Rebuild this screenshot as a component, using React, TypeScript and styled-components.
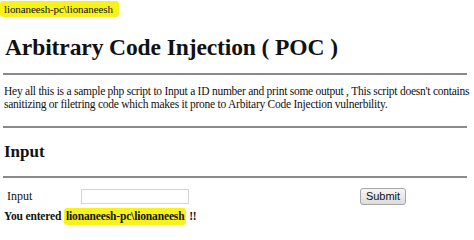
import React from 'react';
import styled, { createGlobalStyle } from 'styled-components';

const Global = createGlobalStyle`
  body {
    margin: 0;
    background: #ffffff;
    font-family: "Liberation Serif", "Times New Roman", serif;
    color: #111;
  }
`;

const Page = styled.div`
  width: 474px;
  height: 234px;
  overflow: hidden;
  padding: 0 4px;
  box-sizing: border-box;
`;

const Marker = styled.span`
  background: #f7f21c;
  padding: 2px 2px 3px;
  border-radius: 3px;
`;

const UserLine = styled.div`
  font-size: 11px;
  line-height: 14px;
  letter-spacing: -0.1px;
  padding-top: 2px;
  margin-left: -4px;
  & > span {
    padding: 2px 6px 2px 4px;
  }
`;

const Title = styled.h1`
  font-size: 23.5px;
  letter-spacing: -0.1px;
  font-weight: bold;
  margin: 17px 0 0 1px;
  line-height: 28px;
`;

const Rule = styled.hr<{ $top: number }>`
  margin: ${(p) => p.$top}px 3px 0 -1px;
  border: none;
  border-top: 2px solid #8a8a8a;
  height: 0;
`;

const Para = styled.p`
  font-size: 11.5px;
  letter-spacing: -0.25px;
  line-height: 13px;
  margin: 10px 0 0 0;
`;

const Section = styled.h2`
  font-size: 17px;
  font-weight: bold;
  margin: 14px 0 0 0;
  line-height: 20px;
`;

const Form = styled.form`
  display: flex;
  align-items: center;
  margin: 9px 0 0 3px;
  height: 18px;
`;

const Label = styled.label`
  font-size: 12px;
  width: 74px;
`;

const TextBox = styled.input`
  width: 108px;
  height: 15px;
  box-sizing: border-box;
  border: 1px solid #d4d4d4;
  padding: 0;
  background: #fff;
`;

const Button = styled.button`
  margin-left: 171px;
  height: 17px;
  width: 46px;
  font-family: "Liberation Sans", Arial, sans-serif;
  font-size: 11px;
  color: #111;
  border: 1px solid #a6a6a6;
  border-radius: 3px;
  background: linear-gradient(#f6f6f6, #dcdcdc);
  padding: 0;
`;

const Result = styled.div`
  font-size: 11.5px;
  letter-spacing: -0.15px;
  font-weight: bold;
  margin-top: 4px;
  line-height: 14px;
`;

export default function App(): JSX.Element {
  return (
    <Page>
      <Global />
      <UserLine>
        <Marker>lionaneesh-pc\lionaneesh</Marker>
      </UserLine>
      <Title>Arbitrary Code Injection ( POC )</Title>
      <Rule $top={12} />
      <Para>
        Hey all this is a sample php script to Input a ID number and print some output , This script doesn't contains
        sanitizing or filetring code which makes it prone to Arbitary Code Injection vulnerbility.
      </Para>
      <Rule $top={15} />
      <Section>Input</Section>
      <Rule $top={14} />
      <Form onSubmit={(e) => e.preventDefault()}>
        <Label>Input</Label>
        <TextBox type="text" />
        <Button type="submit">Submit</Button>
      </Form>
      <Result>
        You entered <Marker>lionaneesh-pc\lionaneesh</Marker> !!
      </Result>
    </Page>
  );
}
